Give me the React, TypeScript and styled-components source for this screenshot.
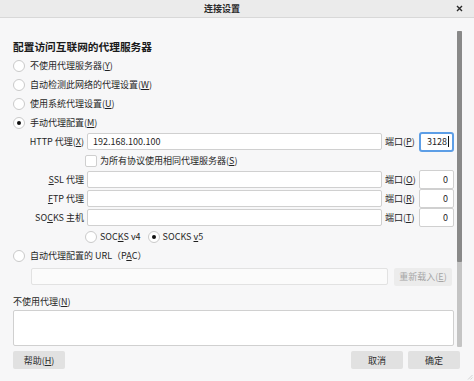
import { Fragment } from "react";
import styled, { createGlobalStyle } from "styled-components";

const GlobalStyle = createGlobalStyle`
  html, body { margin: 0; padding: 0; }
  body {
    font-family: "Noto Sans CJK SC", "Noto Sans", sans-serif;
    font-size: 9px;
    color: #1f1f1f;
    background: #f7f7f8;
  }
  u { text-underline-offset: 1px; }
`;

const Window = styled.div`
  position: relative;
  width: 474px;
  height: 381px;
  display: flex;
  flex-direction: column;
  background: #f7f7f8;
  overflow: hidden;
`;

const TitleBar = styled.header`
  flex: none;
  height: 17px;
  display: grid;
  grid-template-columns: 1fr 30px;
  align-items: center;
  background: #ebebeb;
  border-bottom: 1px solid #d8d8d8;
`;

const Title = styled.h1`
  margin: 0;
  font-size: 9px;
  font-weight: 600;
  line-height: 17px;
  text-align: center;
  color: #2a2a2a;
`;

const CloseButton = styled.button`
  display: grid;
  place-items: center;
  width: 30px;
  height: 17px;
  padding: 0;
  border: none;
  background: none;
`;

const ScrollArea = styled.div`
  flex: none;
  height: 329px;
  display: flex;
  overflow: hidden;
`;

const Content = styled.div`
  flex: 1;
  min-width: 0;
  display: flex;
  flex-direction: column;
  padding: 21px 3px 0 13px;
`;

const Track = styled.div`
  flex: none;
  width: 5px;
  margin: 13px 12px 0 0;
  background: #c4c4c4;
  border-radius: 1px;
`;

const Thumb = styled.div`
  height: 231px;
  background: #898989;
  border-radius: 1px;
`;

const Heading = styled.h2`
  margin: 0 0 1px;
  font-size: 10.7px;
  font-weight: 700;
  line-height: 16px;
  color: #1a1a1a;
`;

const OptionRow = styled.label`
  height: 19px;
  display: flex;
  align-items: center;
  gap: 5px;
  white-space: nowrap;
`;

const Text = styled.span`
  white-space: nowrap;
`;

const Radio = styled.span<{ $checked?: boolean }>`
  flex: none;
  box-sizing: border-box;
  width: 12px;
  height: 12px;
  display: grid;
  place-items: center;
  border: 1px solid #cacaca;
  border-radius: 50%;
  background: #fff;

  &::after {
    content: "";
    width: 4px;
    height: 4px;
    border-radius: 50%;
    background: ${(p) => (p.$checked ? "#111" : "transparent")};
  }
`;

const ProxyGrid = styled.div`
  display: grid;
  grid-template-columns: 71px 1fr 31px 35px;
  grid-auto-rows: 19px;
  column-gap: 3px;
  align-items: center;
`;

const FieldLabel = styled.label`
  text-align: right;
  white-space: nowrap;
  color: #262626;
`;

const PortLabel = styled.label`
  white-space: nowrap;
  color: #262626;
`;

const TextField = styled.input`
  box-sizing: border-box;
  width: 100%;
  height: 17px;
  padding: 0 5px;
  border: 1px solid #d0d0d0;
  border-radius: 2px;
  background: #fff;
  font: inherit;
  color: #1f1f1f;
  outline: none;

  &:disabled {
    background: #fbfbfb;
    border-color: #e2e2e2;
  }
`;

const PortField = styled(TextField)`
  height: 19px;
  text-align: right;
`;

const FocusedPort = styled.div`
  box-sizing: border-box;
  height: 20px;
  display: flex;
  align-items: center;
  justify-content: flex-end;
  padding-right: 3px;
  border: 2px solid #5d9ee6;
  border-radius: 3px;
  background: #fff;
`;

const Caret = styled.span`
  width: 1px;
  height: 11px;
  margin-left: 1px;
  background: #111;
`;

const SpanRow = styled.div`
  grid-column: 2 / 5;
  display: flex;
  align-items: center;
  margin-left: -2px;
  white-space: nowrap;
`;

const CheckBox = styled.span`
  flex: none;
  box-sizing: border-box;
  width: 12px;
  height: 12px;
  margin-right: 3px;
  border: 1px solid #cfcfcf;
  border-radius: 2px;
  background: #fff;
`;

const SocksOption = styled.label`
  display: flex;
  align-items: center;
  gap: 3px;
  margin-right: 7px;
`;

const PacRow = styled.div`
  height: 19px;
  margin-top: 2px;
  display: flex;
  align-items: center;
  gap: 6px;
  padding: 0 2px 0 18px;
`;

const GhostButton = styled.button`
  flex: none;
  width: 58px;
  height: 18px;
  padding: 0;
  border: none;
  border-radius: 2px;
  background: #ececec;
  color: #a6a6a6;
  font: inherit;
`;

const SectionLabel = styled.label`
  margin-top: 8px;
  line-height: 16px;
  color: #262626;
`;

const TextArea = styled.textarea`
  box-sizing: border-box;
  flex: none;
  height: 36px;
  width: 100%;
  border: 1px solid #d0d0d0;
  border-radius: 2px;
  background: #fff;
  resize: none;
  font: inherit;
`;

const Footer = styled.footer`
  flex: 1;
  display: flex;
  gap: 5px;
  padding: 4px 14px 0 13px;
`;

const Button = styled.button<{ $push?: boolean }>`
  width: 52px;
  height: 18px;
  padding: 0;
  margin-left: ${(p) => (p.$push ? "auto" : "0")};
  border: none;
  border-radius: 2px;
  background: #e1e1e1;
  color: #2b2b2b;
  font: inherit;
`;

const Grip = styled.svg`
  position: absolute;
  right: 1px;
  bottom: 1px;
`;

const proxyRows = [
  { id: "ssl", label: <><u>S</u>SL 代理</>, port: "O" },
  { id: "ftp", label: <><u>F</u>TP 代理</>, port: "R" },
  { id: "socks", label: <>SO<u>C</u>KS 主机</>, port: "T" },
];

export default function App() {
  return (
    <>
      <GlobalStyle />
      <Window>
        <TitleBar>
          <Title>连接设置</Title>
          <CloseButton aria-label="关闭">
            <svg width="7" height="7" viewBox="0 0 7 7">
              <path d="M1 1L6 6M6 1L1 6" stroke="#2b2b2b" strokeWidth="1.4" />
            </svg>
          </CloseButton>
        </TitleBar>

        <ScrollArea>
          <Content>
            <Heading>配置访问互联网的代理服务器</Heading>
            <OptionRow>
              <Radio />
              <Text>不使用代理服务器(<u>Y</u>)</Text>
            </OptionRow>
            <OptionRow>
              <Radio />
              <Text>自动检测此网络的代理设置(<u>W</u>)</Text>
            </OptionRow>
            <OptionRow>
              <Radio />
              <Text>使用系统代理设置(<u>U</u>)</Text>
            </OptionRow>
            <OptionRow>
              <Radio $checked />
              <Text>手动代理配置(<u>M</u>)</Text>
            </OptionRow>

            <ProxyGrid>
              <FieldLabel>HTTP 代理(<u>X</u>)</FieldLabel>
              <TextField defaultValue="192.168.100.100" />
              <PortLabel>端口(<u>P</u>)</PortLabel>
              <FocusedPort>
                <Text>3128</Text>
                <Caret />
              </FocusedPort>

              <SpanRow>
                <CheckBox />
                <Text>为所有协议使用相同代理服务器(<u>S</u>)</Text>
              </SpanRow>

              {proxyRows.map((row) => (
                <Fragment key={row.id}>
                  <FieldLabel>{row.label}</FieldLabel>
                  <TextField />
                  <PortLabel>
                    端口(<u>{row.port}</u>)
                  </PortLabel>
                  <PortField defaultValue="0" />
                </Fragment>
              ))}

              <SpanRow>
                <SocksOption>
                  <Radio />
                  <Text>SOC<u>K</u>S v4</Text>
                </SocksOption>
                <SocksOption>
                  <Radio $checked />
                  <Text>SOCKS <u>v</u>5</Text>
                </SocksOption>
              </SpanRow>
            </ProxyGrid>

            <OptionRow>
              <Radio />
              <Text>自动代理配置的 URL（P<u>A</u>C）</Text>
            </OptionRow>
            <PacRow>
              <TextField disabled />
              <GhostButton disabled>
                重新载入(<u>E</u>)
              </GhostButton>
            </PacRow>

            <SectionLabel>
              不使用代理(<u>N</u>)
            </SectionLabel>
            <TextArea />
          </Content>
          <Track>
            <Thumb />
          </Track>
        </ScrollArea>

        <Footer>
          <Button>
            帮助(<u>H</u>)
          </Button>
          <Button $push>取消</Button>
          <Button>确定</Button>
        </Footer>

        <Grip width="6" height="6" viewBox="0 0 6 6">
          <path d="M5.5 1L1 5.5M5.5 3.5L3.5 5.5" stroke="#c9c9c9" strokeWidth="0.8" />
        </Grip>
      </Window>
    </>
  );
}
